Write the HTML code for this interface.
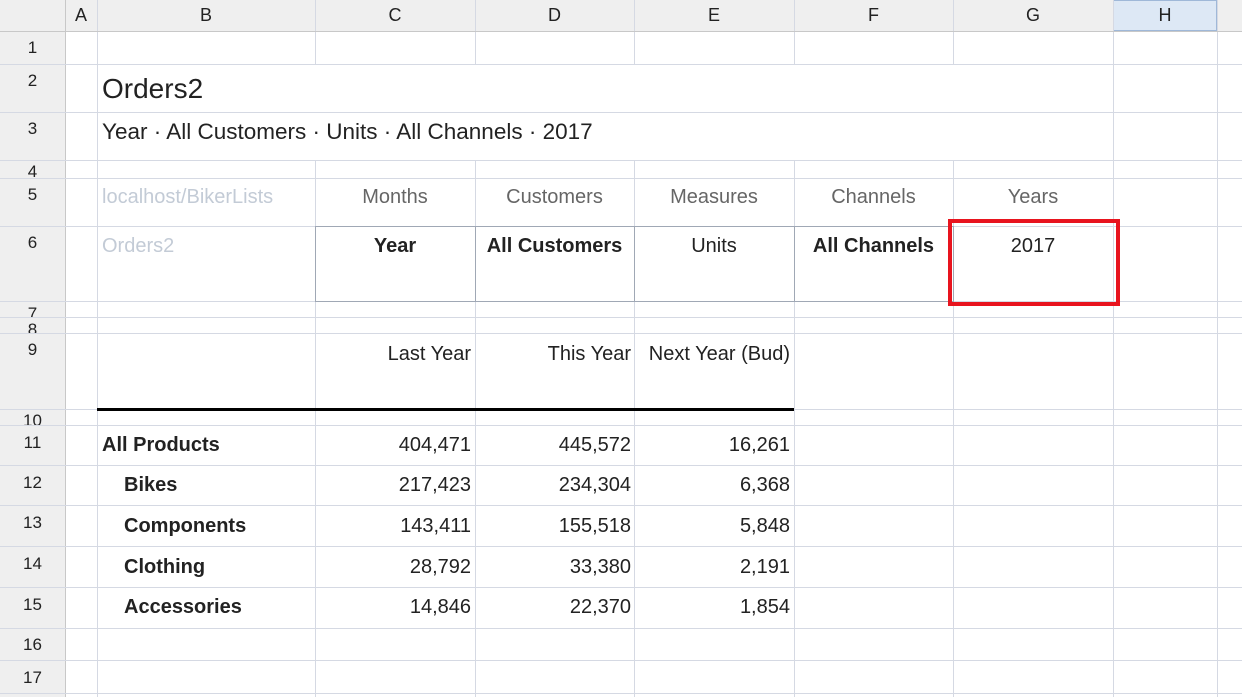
<!DOCTYPE html><html><head><style>
*{margin:0;padding:0;box-sizing:border-box}
body{width:1242px;height:697px;overflow:hidden;background:#fff;font-family:"Liberation Sans",sans-serif;position:relative;color:#222}
.v{position:absolute;top:0;width:1px;height:697px;background:#d5d9e3}
.h{position:absolute;left:0;height:1px;width:1242px;background:#d5d9e3}
.t{position:absolute;white-space:nowrap;font-size:20px}
.rh{position:absolute;left:0;width:65px;text-align:center;font-size:17px;color:#222;overflow:hidden}
.ch{position:absolute;top:0;height:31px;line-height:31px;text-align:center;font-size:18px}
.r{text-align:right}.c{text-align:center}.b{font-weight:bold}
</style></head><body>
<div style="position:absolute;left:0;top:0;width:1242px;height:31px;background:#efefef"></div>
<div style="position:absolute;left:0;top:0;width:65px;height:697px;background:#efefef"></div>
<div style="position:absolute;left:1113px;top:0;width:104px;height:31px;background:#dde8f5;border:1px solid #9fb8d8"></div>
<div class="v" style="left:65px;background:#c8c8c8"></div>
<div class="v" style="left:97px"></div><div class="v" style="left:315px"></div><div class="v" style="left:475px"></div><div class="v" style="left:634px"></div><div class="v" style="left:794px"></div><div class="v" style="left:953px"></div><div class="v" style="left:1113px"></div><div class="v" style="left:1217px"></div>
<div class="h" style="top:31px;background:#c8c8c8"></div>
<div class="h" style="top:64px"></div><div class="h" style="top:112px"></div><div class="h" style="top:160px"></div><div class="h" style="top:178px"></div><div class="h" style="top:226px"></div><div class="h" style="top:301px"></div><div class="h" style="top:317px"></div><div class="h" style="top:333px"></div><div class="h" style="top:409px"></div><div class="h" style="top:425px"></div><div class="h" style="top:465px"></div><div class="h" style="top:505px"></div><div class="h" style="top:546px"></div><div class="h" style="top:587px"></div><div class="h" style="top:628px"></div><div class="h" style="top:660px"></div><div class="h" style="top:693px"></div>
<div style="position:absolute;left:98px;top:65px;width:1015px;height:95px;background:#fff"></div>
<div style="position:absolute;left:98px;top:112px;width:1015px;height:1px;background:#d5d9e3"></div>
<div style="position:absolute;left:315px;top:226px;width:639px;height:76px;border:1px solid #a0a8b5"></div>
<div style="position:absolute;left:475px;top:226px;width:1px;height:75px;background:#a0a8b5"></div>
<div style="position:absolute;left:634px;top:226px;width:1px;height:75px;background:#a0a8b5"></div>
<div style="position:absolute;left:794px;top:226px;width:1px;height:75px;background:#a0a8b5"></div>
<div style="position:absolute;left:97px;top:408px;width:697px;height:3px;background:#000"></div>
<div style="position:absolute;left:948px;top:219px;width:172px;height:87px;border:4px solid #e8141e"></div>
<div class="ch" style="left:65px;width:32px">A</div><div class="ch" style="left:97px;width:218px">B</div><div class="ch" style="left:315px;width:160px">C</div><div class="ch" style="left:475px;width:159px">D</div><div class="ch" style="left:634px;width:160px">E</div><div class="ch" style="left:794px;width:159px">F</div><div class="ch" style="left:953px;width:160px">G</div><div class="ch" style="left:1113px;width:104px">H</div>
<div class="rh" style="top:38px">1</div><div class="rh" style="top:71px">2</div><div class="rh" style="top:119px">3</div><div class="rh" style="top:162px;height:16px">4</div><div class="rh" style="top:185px">5</div><div class="rh" style="top:233px">6</div><div class="rh" style="top:304px;height:13px">7</div><div class="rh" style="top:320px;height:13px">8</div><div class="rh" style="top:340px">9</div><div class="rh" style="top:411px;height:14px">10</div><div class="rh" style="top:433px">11</div><div class="rh" style="top:473px">12</div><div class="rh" style="top:513px">13</div><div class="rh" style="top:554px">14</div><div class="rh" style="top:595px">15</div><div class="rh" style="top:635px">16</div><div class="rh" style="top:668px">17</div>
<div class="t" style="left:102px;top:73px;font-size:28px">Orders2</div>
<div class="t" style="left:102px;top:119px;font-size:22.5px">Year · All Customers · Units · All Channels · 2017</div>
<div class="t" style="left:102px;top:186px;color:#c3cbd6">localhost/BikerLists</div>
<div class="t" style="left:102px;top:235px;color:#c3cbd6">Orders2</div>
<div class="t c" style="left:315px;width:160px;top:186px;color:#666">Months</div>
<div class="t c" style="left:475px;width:159px;top:186px;color:#666">Customers</div>
<div class="t c" style="left:634px;width:160px;top:186px;color:#666">Measures</div>
<div class="t c" style="left:794px;width:159px;top:186px;color:#666">Channels</div>
<div class="t c" style="left:953px;width:160px;top:186px;color:#666">Years</div>
<div class="t c b" style="left:315px;width:160px;top:235px">Year</div>
<div class="t c b" style="left:475px;width:159px;top:235px">All Customers</div>
<div class="t c" style="left:634px;width:160px;top:235px">Units</div>
<div class="t c b" style="left:794px;width:159px;top:235px">All Channels</div>
<div class="t c" style="left:953px;width:160px;top:235px">2017</div>
<div class="t r" style="left:315px;width:156px;top:343px">Last Year</div>
<div class="t r" style="left:475px;width:156px;top:343px">This Year</div>
<div class="t r" style="left:634px;width:156px;top:343px">Next Year (Bud)</div>
<div class="t b" style="left:102px;top:434px">All Products</div>
<div class="t b" style="left:124px;top:474px">Bikes</div>
<div class="t b" style="left:124px;top:515px">Components</div>
<div class="t b" style="left:124px;top:556px">Clothing</div>
<div class="t b" style="left:124px;top:596px">Accessories</div>
<div class="t r" style="left:315px;width:156px;top:434px">404,471</div><div class="t r" style="left:475px;width:156px;top:434px">445,572</div><div class="t r" style="left:634px;width:156px;top:434px">16,261</div>
<div class="t r" style="left:315px;width:156px;top:474px">217,423</div><div class="t r" style="left:475px;width:156px;top:474px">234,304</div><div class="t r" style="left:634px;width:156px;top:474px">6,368</div>
<div class="t r" style="left:315px;width:156px;top:515px">143,411</div><div class="t r" style="left:475px;width:156px;top:515px">155,518</div><div class="t r" style="left:634px;width:156px;top:515px">5,848</div>
<div class="t r" style="left:315px;width:156px;top:556px">28,792</div><div class="t r" style="left:475px;width:156px;top:556px">33,380</div><div class="t r" style="left:634px;width:156px;top:556px">2,191</div>
<div class="t r" style="left:315px;width:156px;top:596px">14,846</div><div class="t r" style="left:475px;width:156px;top:596px">22,370</div><div class="t r" style="left:634px;width:156px;top:596px">1,854</div>
</body></html>
